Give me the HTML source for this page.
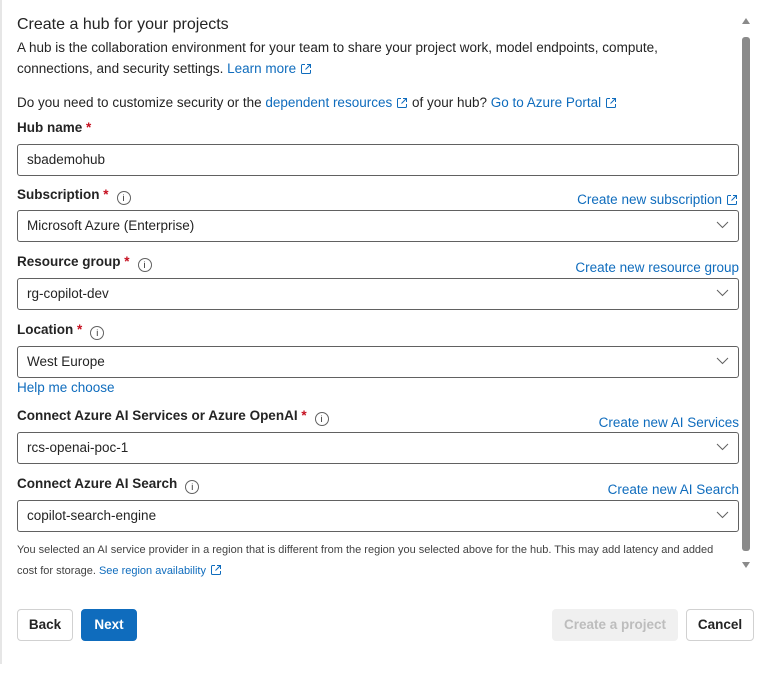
<!DOCTYPE html>
<html><head><meta charset="utf-8"><style>
*{box-sizing:border-box;margin:0;padding:0}
body{width:765px;height:674px;background:#fff;font-family:"Liberation Sans",sans-serif;color:#242424;position:relative;overflow:hidden;font-size:13.5px}
.a{position:absolute;white-space:nowrap}
.lk{color:#0f6cbd}
.lbl{font-weight:bold;font-size:13.5px}
.req{color:#c50f1f}
.box{position:absolute;left:17px;width:722px;height:32px;border:1px solid #616161;border-radius:3px;padding-left:9px;line-height:30px;font-size:13.5px}
.box svg{position:absolute;right:9px;top:10px}
.info{display:inline-block;width:14px;height:14px;border:1px solid #616161;border-radius:50%;font-size:9px;line-height:12px;text-align:center;font-weight:normal;margin-left:8px;vertical-align:-2px}
.ext{display:inline-block;vertical-align:-2px;margin-left:4px}
.btn{position:absolute;top:609px;height:32px;border:1px solid #d1d1d1;border-radius:4px;font-weight:bold;font-size:13.5px;line-height:30px;text-align:center}
</style></head><body>
<div class="a" style="left:0;top:0;width:2px;height:664px;background:#e6e6e6"></div>
<div class="a" style="left:17px;top:16px;font-size:16px">Create a hub for your projects</div>
<div class="a" style="left:17px;top:37px;line-height:21px">A hub is the collaboration environment for your team to share your project work, model endpoints, compute,<br>connections, and security settings. <span class="lk">Learn more<svg class="ext" width="12" height="12" viewBox="0 0 12 12"><path d="M5 1.5H2.5a1 1 0 0 0-1 1v7a1 1 0 0 0 1 1h7a1 1 0 0 0 1-1V7M7 1.5h3.5V5M10.5 1.5 5.5 6.5" fill="none" stroke="#0f6cbd" stroke-width="1"/></svg></span></div>
<div class="a" style="left:17px;top:95px">Do you need to customize security or the <span class="lk">dependent resources<svg class="ext" width="12" height="12" viewBox="0 0 12 12"><path d="M5 1.5H2.5a1 1 0 0 0-1 1v7a1 1 0 0 0 1 1h7a1 1 0 0 0 1-1V7M7 1.5h3.5V5M10.5 1.5 5.5 6.5" fill="none" stroke="#0f6cbd"/></svg></span> of your hub? <span class="lk">Go to Azure Portal<svg class="ext" width="12" height="12" viewBox="0 0 12 12"><path d="M5 1.5H2.5a1 1 0 0 0-1 1v7a1 1 0 0 0 1 1h7a1 1 0 0 0 1-1V7M7 1.5h3.5V5M10.5 1.5 5.5 6.5" fill="none" stroke="#0f6cbd"/></svg></span></div>

<div class="a lbl" style="left:17px;top:120px">Hub name <span class="req">*</span></div>
<div class="box" style="top:144px">sbademohub</div>

<div class="a lbl" style="left:17px;top:187px">Subscription <span class="req">*</span><span class="info">i</span></div>
<div class="a lk" style="right:27px;top:192px">Create new subscription<svg class="ext" width="12" height="12" viewBox="0 0 12 12"><path d="M5 1.5H2.5a1 1 0 0 0-1 1v7a1 1 0 0 0 1 1h7a1 1 0 0 0 1-1V7M7 1.5h3.5V5M10.5 1.5 5.5 6.5" fill="none" stroke="#0f6cbd"/></svg></div>
<div class="box" style="top:210px">Microsoft Azure (Enterprise)<svg width="13" height="8" viewBox="0 0 13 8"><path d="M1 1l5.5 5.5L12 1" fill="none" stroke="#616161"/></svg></div>

<div class="a lbl" style="left:17px;top:254px">Resource group <span class="req">*</span><span class="info">i</span></div>
<div class="a lk" style="right:26px;top:260px">Create new resource group</div>
<div class="box" style="top:278px">rg-copilot-dev<svg width="13" height="8" viewBox="0 0 13 8"><path d="M1 1l5.5 5.5L12 1" fill="none" stroke="#616161"/></svg></div>

<div class="a lbl" style="left:17px;top:322px">Location <span class="req">*</span><span class="info">i</span></div>
<div class="box" style="top:346px">West Europe<svg width="13" height="8" viewBox="0 0 13 8"><path d="M1 1l5.5 5.5L12 1" fill="none" stroke="#616161"/></svg></div>
<div class="a lk" style="left:17px;top:380px">Help me choose</div>

<div class="a lbl" style="left:17px;top:408px">Connect Azure AI Services or Azure OpenAI <span class="req">*</span><span class="info">i</span></div>
<div class="a lk" style="right:26px;top:415px">Create new AI Services</div>
<div class="box" style="top:432px">rcs-openai-poc-1<svg width="13" height="8" viewBox="0 0 13 8"><path d="M1 1l5.5 5.5L12 1" fill="none" stroke="#616161"/></svg></div>

<div class="a lbl" style="left:17px;top:476px">Connect Azure AI Search<span class="info">i</span></div>
<div class="a lk" style="right:26px;top:482px">Create new AI Search</div>
<div class="box" style="top:500px">copilot-search-engine<svg width="13" height="8" viewBox="0 0 13 8"><path d="M1 1l5.5 5.5L12 1" fill="none" stroke="#616161"/></svg></div>

<div class="a" style="left:17px;top:540px;font-size:11px;line-height:21px;color:#424242">You selected an AI service provider in a region that is different from the region you selected above for the hub. This may add latency and added<br>cost for storage. <span class="lk">See region availability<svg class="ext" width="12" height="12" viewBox="0 0 12 12"><path d="M5 1.5H2.5a1 1 0 0 0-1 1v7a1 1 0 0 0 1 1h7a1 1 0 0 0 1-1V7M7 1.5h3.5V5M10.5 1.5 5.5 6.5" fill="none" stroke="#0f6cbd"/></svg></span></div>

<div class="a" style="left:742px;top:18px;width:0;height:0;border-left:4px solid transparent;border-right:4px solid transparent;border-bottom:6px solid #8a8a8a"></div>
<div class="a" style="left:742px;top:37px;width:8px;height:514px;background:#8a8a8a;border-radius:3px"></div>
<div class="a" style="left:742px;top:562px;width:0;height:0;border-left:4px solid transparent;border-right:4px solid transparent;border-top:6px solid #8a8a8a"></div>

<div class="btn" style="left:17px;width:56px;color:#242424">Back</div>
<div class="btn" style="left:81px;width:56px;background:#0f6cbd;border-color:#0f6cbd;color:#fff">Next</div>
<div class="btn" style="left:552px;width:126px;background:#f0f0f0;border-color:#f0f0f0;color:#bdbdbd">Create a project</div>
<div class="btn" style="left:686px;width:68px;color:#242424">Cancel</div>
</body></html>
